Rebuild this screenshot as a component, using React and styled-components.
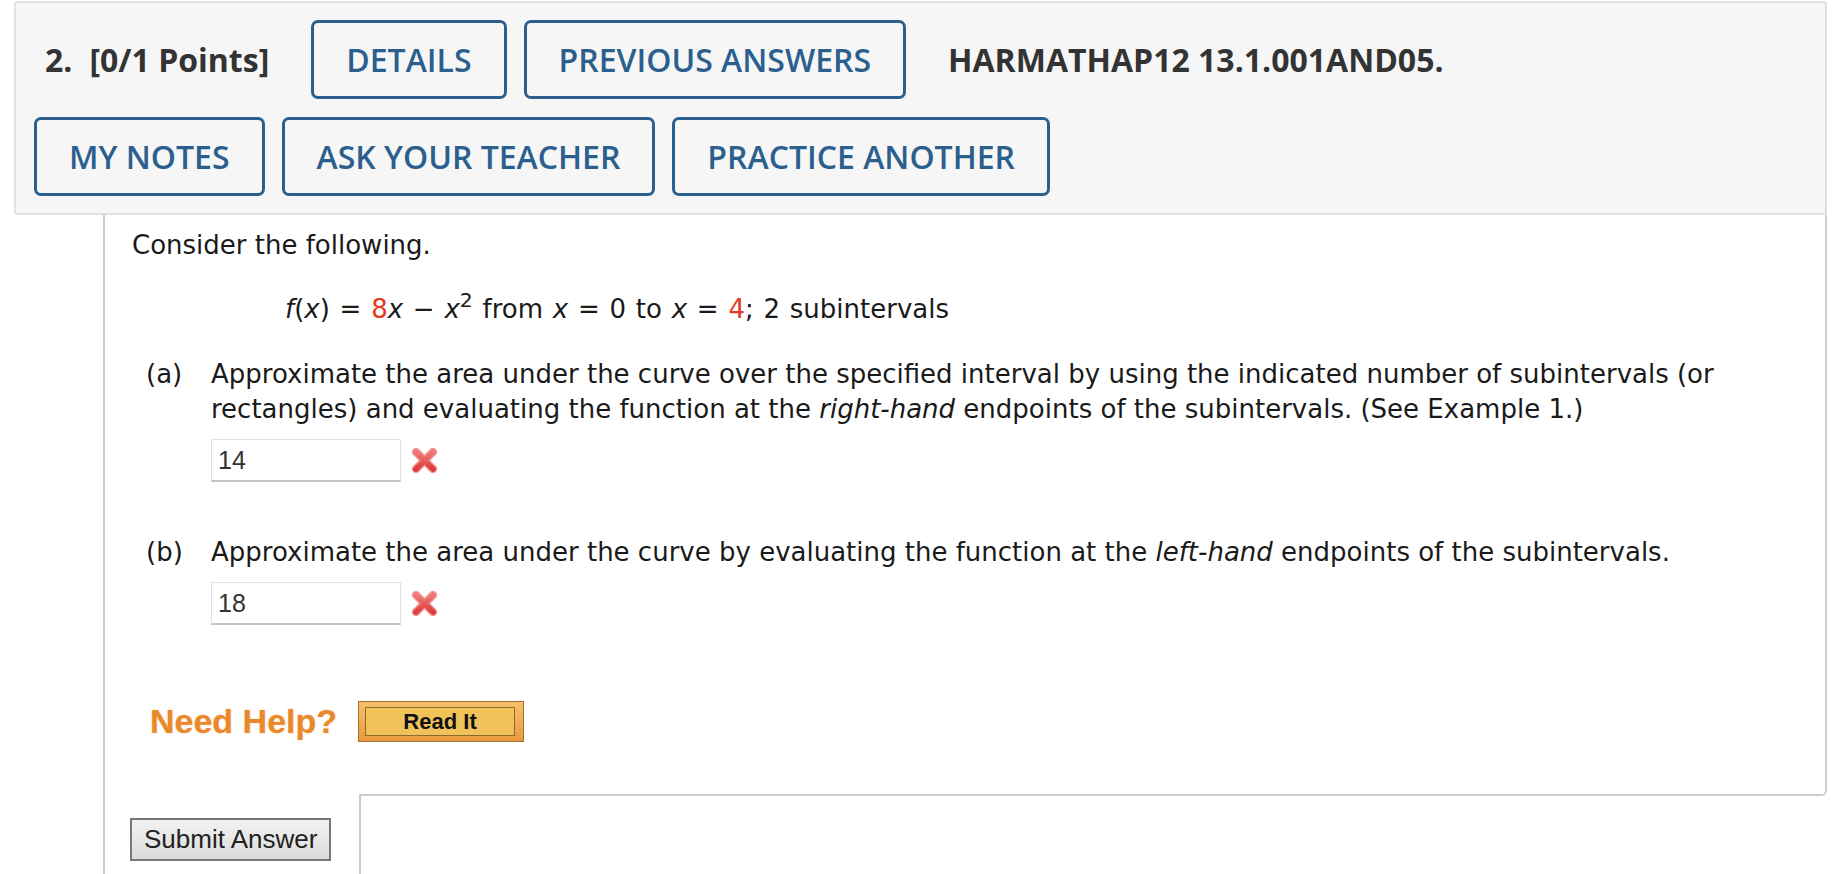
import React from 'react';
import styled, { createGlobalStyle } from 'styled-components';

const Global = createGlobalStyle`
  html, body { margin: 0; padding: 0; background: #ffffff; }
  body { font-family: "DejaVu Sans", Verdana, sans-serif; color: #1a1a1a; }
  * { box-sizing: border-box; }
`;

const Page = styled.div`
  padding: 1px 7px 0 14px;
`;

const Header = styled.header`
  background: #f6f6f6;
  border: 2px solid #e1e1e1;
  border-radius: 3px;
  padding: 17px 18px 17px;
  display: flex;
  flex-direction: column;
  gap: 18px;
`;

const HeaderRow = styled.div`
  display: flex;
  align-items: center;
  gap: 17px;
`;

const QuestionLabel = styled.div`
  font-family: "Open Sans", sans-serif;
  font-weight: 700;
  font-size: 32px;
  color: #333333;
  margin-left: 11px;
  margin-right: 25px;
  display: flex;
  gap: 17px;
  white-space: nowrap;
`;

const QuestionCode = styled.div`
  font-family: "Open Sans", sans-serif;
  font-weight: 700;
  font-size: 32px;
  color: #333333;
  margin-left: 25px;
  white-space: nowrap;
`;

const ActionButton = styled.button`
  font-family: "Open Sans", sans-serif;
  font-weight: 600;
  font-size: 32px;
  line-height: 1;
  color: #2b5f8e;
  background: transparent;
  border: 3px solid #2b5f8e;
  border-radius: 7px;
  height: 79px;
  padding: 0 32px;
  white-space: nowrap;
  cursor: pointer;
`;

const Main = styled.div`
  margin-left: 89px;
  border-left: 2px solid #cccccc;
`;

const Body = styled.section`
  padding: 13px 0 54px 27px;
  border-right: 2px solid #cccccc;
  border-bottom-right-radius: 6px;
  background: linear-gradient(#cccccc, #cccccc) right bottom / calc(100% - 254px) 2px no-repeat;
  font-size: 26px;
  line-height: 35px;
`;

const Paragraph = styled.p`
  margin: 0;
`;

const Formula = styled.p`
  margin: 29px 0 0;
  padding-left: 153px;
  word-spacing: 1.5px;
`;

const Var = styled.i`
  font-style: italic;
`;

const Red = styled.span`
  color: #e23a22;
`;

const Sup = styled.sup`
  font-size: 0.78em;
  line-height: 0;
  vertical-align: 0.55em;
`;

const Part = styled.div`
  display: grid;
  grid-template-columns: 65px 1fr;
  padding-left: 14px;
  margin-top: ${p => p.$top}px;
`;

const PartLabel = styled.span``;

const PartContent = styled.div``;

const AnswerRow = styled.div`
  display: flex;
  align-items: center;
  gap: 10px;
  margin-top: 12px;
`;

const AnswerInput = styled.input`
  width: 190px;
  height: 43px;
  border: 1px solid #e2e2e2;
  border-bottom: 2px solid #c4c4c4;
  background: #ffffff;
  font-family: "Liberation Sans", Arial, sans-serif;
  font-size: 25px;
  color: #333333;
  padding: 0 6px;
  outline: none;
`;

const HelpRow = styled.div`
  display: flex;
  align-items: center;
  gap: 21px;
  margin-top: 76px;
  margin-left: 18px;
`;

const NeedHelp = styled.span`
  font-family: "Liberation Sans", Arial, sans-serif;
  font-weight: 700;
  font-size: 34px;
  color: #e8892c;
  text-shadow: 0 0 2px rgba(232, 137, 44, 0.45);
`;

const ReadItOuter = styled.button`
  display: inline-flex;
  border: 1px solid #a5702f;
  background: linear-gradient(#f6c06c, #e99a3e);
  padding: 5px 8px 5px 6px;
  cursor: pointer;
`;

const ReadItInner = styled.span`
  display: flex;
  align-items: center;
  justify-content: center;
  width: 150px;
  height: 29px;
  border: 1px solid #8d6a2e;
  background: #f2c25a;
  font-family: "Liberation Sans", Arial, sans-serif;
  font-weight: 700;
  font-size: 22px;
  color: #111111;
`;

const Footer = styled.div`
  display: flex;
  min-height: 110px;
`;

const SubmitCell = styled.div`
  width: 254px;
  padding: 22px 0 0 25px;
`;

const SubmitButton = styled.button`
  font-family: "Liberation Sans", Arial, sans-serif;
  font-size: 26px;
  color: #222222;
  background: linear-gradient(#f2f2f2, #dcdcdc);
  border: 2px solid #777777;
  height: 43px;
  padding: 0 12px;
  white-space: nowrap;
  cursor: pointer;
`;

const BlankBox = styled.div`
  flex: 1;
  border-left: 2px solid #cccccc;
`;

const WrongMark = () => (
  <svg width="27" height="27" viewBox="0 0 27 27" aria-label="incorrect">
    <defs>
      <linearGradient id="xg" x1="0" y1="0" x2="0" y2="1">
        <stop offset="0" stopColor="#f07a7a" />
        <stop offset="1" stopColor="#dc3e3e" />
      </linearGradient>
    </defs>
    <path d="M5 5 L22 22 M22 5 L5 22" stroke="#f4a3a3" strokeWidth="8.5" strokeLinecap="round" />
    <path d="M5 5 L22 22 M22 5 L5 22" stroke="url(#xg)" strokeWidth="6" strokeLinecap="round" />
  </svg>
);

export default function App() {
  return (
    <>
      <Global />
      <Page>
        <Header>
          <HeaderRow>
            <QuestionLabel>
              <span>2.</span>
              <span>[0/1 Points]</span>
            </QuestionLabel>
            <ActionButton>DETAILS</ActionButton>
            <ActionButton>PREVIOUS ANSWERS</ActionButton>
            <QuestionCode>HARMATHAP12 13.1.001AND05.</QuestionCode>
          </HeaderRow>
          <HeaderRow>
            <ActionButton>MY NOTES</ActionButton>
            <ActionButton>ASK YOUR TEACHER</ActionButton>
            <ActionButton>PRACTICE ANOTHER</ActionButton>
          </HeaderRow>
        </Header>
        <Main>
          <Body>
            <Paragraph>Consider the following.</Paragraph>
            <Formula>
              <Var>f</Var>(<Var>x</Var>) = <Red>8</Red><Var>x</Var> − <Var>x</Var><Sup>2</Sup> from <Var>x</Var> = 0 to <Var>x</Var> = <Red>4</Red>; 2 subintervals
            </Formula>
            <Part $top={30}>
              <PartLabel>(a)</PartLabel>
              <PartContent>
                <Paragraph>
                  Approximate the area under the curve over the specified interval by using the indicated number of subintervals (or
                  <br />
                  rectangles) and evaluating the function at the <i>right-hand</i> endpoints of the subintervals. (See Example 1.)
                </Paragraph>
                <AnswerRow>
                  <AnswerInput defaultValue="14" />
                  <WrongMark />
                </AnswerRow>
              </PartContent>
            </Part>
            <Part $top={53}>
              <PartLabel>(b)</PartLabel>
              <PartContent>
                <Paragraph>
                  Approximate the area under the curve by evaluating the function at the <i>left-hand</i> endpoints of the subintervals.
                </Paragraph>
                <AnswerRow>
                  <AnswerInput defaultValue="18" />
                  <WrongMark />
                </AnswerRow>
              </PartContent>
            </Part>
            <HelpRow>
              <NeedHelp>Need Help?</NeedHelp>
              <ReadItOuter>
                <ReadItInner>Read It</ReadItInner>
              </ReadItOuter>
            </HelpRow>
          </Body>
          <Footer>
            <SubmitCell>
              <SubmitButton>Submit Answer</SubmitButton>
            </SubmitCell>
            <BlankBox />
          </Footer>
        </Main>
      </Page>
    </>
  );
}
